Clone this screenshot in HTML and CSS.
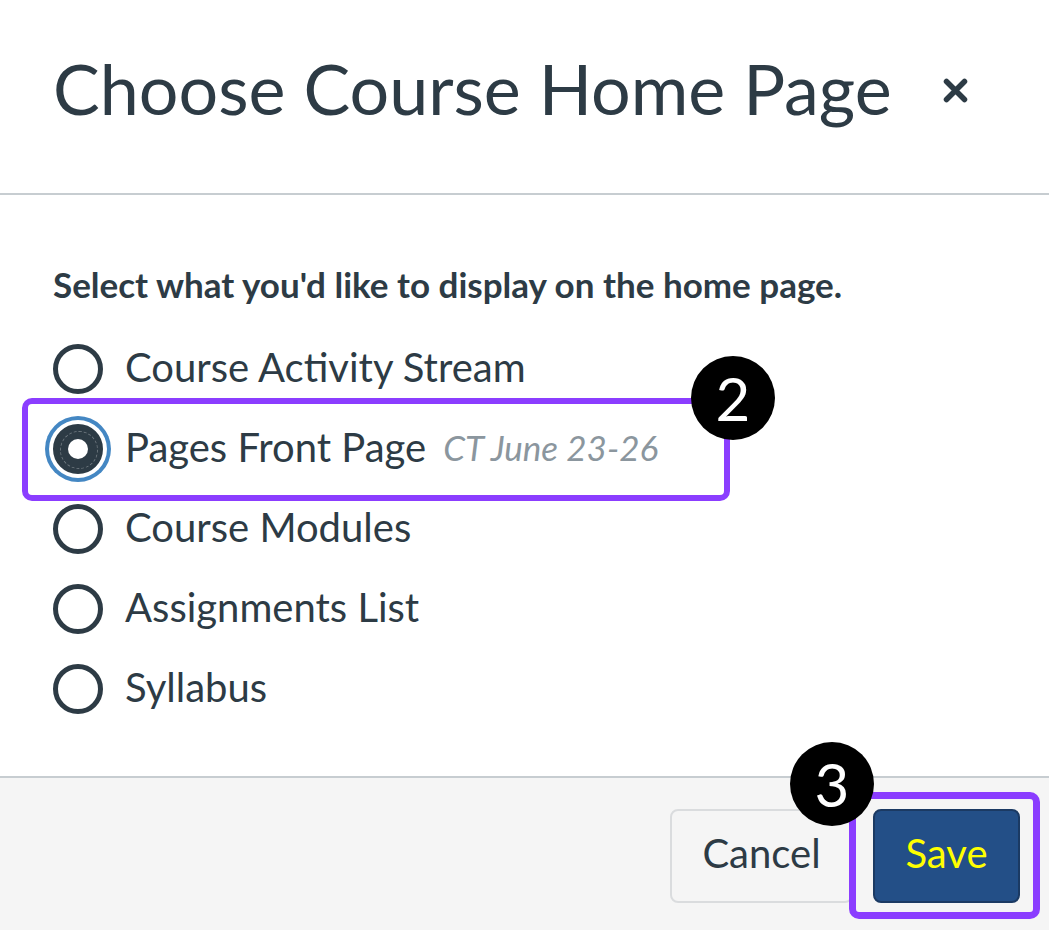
FILE: index.html
```html
<!DOCTYPE html>
<html lang="en">

<head>
    <meta charset="UTF-8">
    <meta name="viewport" content="width=device-width, initial-scale=1.0">
    <title>Choose Course Home Page</title>

    <link rel="stylesheet" href="styles.css">

</head>

<body>

    <div class="dialog">
        <header class="dialog-header">
            <h1 class="dialog-title">Choose Course Home Page</h1>
            <button class="close-btn" aria-label="Close">
                <svg width="25" height="25" viewBox="0 0 25 25">
                    <path d="M3.5 3.5 L21.5 21.5 M21.5 3.5 L3.5 21.5" stroke="#2d3b45" stroke-width="5.5"
                        stroke-linecap="round" fill="none" />
                </svg>
            </button>
        </header>

        <div class="dialog-body">
            <p class="prompt">Select what you'd like to display on the home page.</p>

            <ul class="options">
                <li class="option">
                    <span class="radio"></span>
                    <span class="option-label">Course Activity Stream</span>
                </li>
                <li class="option is-checked">
                    <span class="radio"></span>
                    <span class="option-label">Pages Front Page</span>
                    <span class="option-note">CT June 23-26</span>
                    <!-- step 2 callout -->
                    <span class="callout callout-option"></span>
                    <span class="step-badge badge-option">2</span>
                </li>
                <li class="option">
                    <span class="radio"></span>
                    <span class="option-label">Course Modules</span>
                </li>
                <li class="option">
                    <span class="radio"></span>
                    <span class="option-label">Assignments List</span>
                </li>
                <li class="option">
                    <span class="radio"></span>
                    <span class="option-label">Syllabus</span>
                </li>
            </ul>
        </div>

        <footer class="dialog-footer">
            <button class="btn btn-cancel">Cancel</button>
            <div class="save-wrap">
                <button class="btn btn-save">Save</button>
                <!-- step 3 callout -->
                <span class="callout callout-save"></span>
                <span class="step-badge badge-save">3</span>
            </div>
        </footer>
    </div>

</body>

</html>
```

FILE: styles.css
```css
* {
    margin: 0;
    padding: 0;
    box-sizing: border-box;
}

body {
    font-family: 'Lato', 'Helvetica Neue', Arial, sans-serif;
    background: #fff;
    color: #2d3b45;
    width: 1049px;
    height: 930px;
    overflow: hidden;
}

.dialog {
    display: flex;
    flex-direction: column;
    height: 100%;
}

/* header */

.dialog-header {
    display: flex;
    align-items: flex-start;
    padding: 46px 81px 62px 53px;
    border-bottom: 2px solid #c7cdd1;
}

.dialog-title {
    font-size: 70px;
    font-weight: 400;
    line-height: 85px;
}

.close-btn {
    margin-left: auto;
    margin-top: 32px;
    width: 25px;
    height: 25px;
    border: none;
    background: none;
    display: flex;
}

/* body */

.dialog-body {
    padding: 70px 53px 47px;
}

.prompt {
    font-size: 35px;
    font-weight: 700;
    line-height: 38px;
}

.options {
    list-style: none;
    margin-top: 26px;
}

.option {
    position: relative;
    display: flex;
    align-items: center;
    height: 80px;
    font-size: 40px;
}

.radio {
    position: relative;
    flex: none;
    width: 50px;
    height: 50px;
    border: 5px solid #2d3b45;
    border-radius: 50%;
    margin-right: 22px;
}

.option-label {
    padding-bottom: 4px;
}

.is-checked .radio {
    background: #2d3b45;
    box-shadow: 0 0 0 4px #fff, 0 0 0 8px #4487c3;
}

/* white centre dot */
.is-checked .radio::before {
    content: '';
    position: absolute;
    top: 50%;
    left: 50%;
    width: 20px;
    height: 20px;
    margin: -10px 0 0 -10px;
    border-radius: 50%;
    background: #fff;
}

.is-checked .radio::after {
    content: '';
    position: absolute;
    top: 50%;
    left: 50%;
    width: 36px;
    height: 36px;
    margin: -18px 0 0 -18px;
    border-radius: 50%;
    border: 1px dashed rgba(255, 255, 255, 0.3);
}

.option-note {
    margin-left: 17px;
    padding-bottom: 4px;
    font-size: 35px;
    font-style: italic;
    color: #8b969e;
}

/* footer */

.dialog-footer {
    flex: 1;
    display: flex;
    justify-content: flex-end;
    align-items: flex-start;
    gap: 20px;
    padding: 31px 29px 0 0;
    background: #f5f5f5;
    border-top: 2px solid #c7cdd1;
}

.btn {
    height: 94px;
    padding-bottom: 6px;
    font-family: inherit;
    font-size: 40px;
    border-radius: 8px;
    border: 2px solid;
}

.btn-cancel {
    width: 183px;
    background: #f5f5f5;
    border-color: #dadcde;
    color: #2d3b45;
}

.btn-save {
    width: 147px;
    background: #234f87;
    border-color: #1b3a63;
    color: #ffff00;
}

.save-wrap {
    position: relative;
}

/* annotation overlays */

.callout {
    position: absolute;
    border: 6px solid #8b3dff;
    border-radius: 10px;
    pointer-events: none;
}

.callout-option {
    left: -31px;
    top: -11px;
    width: 708px;
    height: 103px;
}

.callout-save {
    left: -24px;
    top: -17px;
    width: 191px;
    height: 127px;
    border-width: 7px;
}

.step-badge {
    position: absolute;
    z-index: 2;
    width: 84px;
    height: 84px;
    border-radius: 50%;
    background: #000;
    color: #fff;
    font-size: 60px;
    line-height: 84px;
    text-align: center;
}

.badge-option {
    left: 638px;
    top: -53px;
}

.badge-save {
    left: -83px;
    top: -67px;
}
```
